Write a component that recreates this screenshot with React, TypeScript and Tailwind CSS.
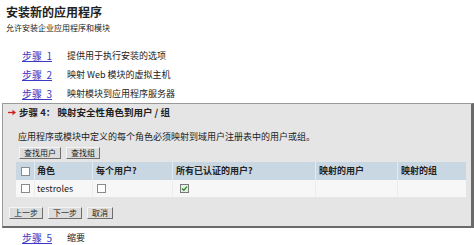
import React from 'react';

const steps = [
  { n: 1, label: '提供用于执行安装的选项' },
  { n: 2, label: '映射 Web 模块的虚拟主机' },
  { n: 3, label: '映射模块到应用程序服务器' },
];

const Box = ({ checked = false }: { checked?: boolean }) => (
  <span
    className={
      checked
        ? 'flex h-[9px] w-[9px] items-center justify-center border border-[#7a7a7a] bg-[#e4f2e4]'
        : 'block h-[9px] w-[9px] border border-[#8a8a8a] bg-white'
    }
  >
    {checked && (
      <svg width="7" height="7" viewBox="0 0 7 7">
        <path d="M1 3.5 L2.8 5.2 L6 1.6" fill="none" stroke="#2f8a2f" strokeWidth="1.4" />
      </svg>
    )}
  </span>
);

const Btn = ({ children }: { children: React.ReactNode }) => (
  <button
    type="button"
    className="flex h-[12px] items-center border border-t-[#f4f4f4] border-l-[#f4f4f4] border-r-[#6e6e6e] border-b-[#6e6e6e] bg-[#dcdcdc] px-[4px] text-[8px] leading-none text-[#222]"
  >
    {children}
  </button>
);

const StepLink = ({ n }: { n: number }) => (
  <span className="flex w-[45px] items-center">
    <span className="whitespace-pre text-[10px] leading-[12px] text-[#3a3ac4] underline underline-offset-1">
      {`步骤  ${n}`}
    </span>
  </span>
);

export default function App() {
  return (
    <div
      className="h-[245px] w-[474px] overflow-hidden bg-white text-[#222]"
      style={{ fontFamily: '"Noto Sans CJK SC", "Liberation Sans", sans-serif' }}
    >
      <div className="flex h-[19px] items-end pl-[6px] text-[12px] font-bold leading-[14px]">
        安装新的应用程序
      </div>
      <div className="mt-[4px] flex h-[10px] items-center pl-[6px] text-[8px]">允许安装企业应用程序和模块</div>

      <div className="mt-[13px] pl-[22px]">
        {steps.map((s) => (
          <div key={s.n} className="flex h-[19px] items-center">
            <StepLink n={s.n} />
            <span className="text-[9px] leading-[12px]">{s.label}</span>
          </div>
        ))}
      </div>

      <div className="ml-[2px] h-[125px] w-[472px] border-t border-l border-t-[#9a9a9a] border-l-[#9a9a9a] border-r-[3px] border-b-[2px] border-r-[#6a6a6a] border-b-[#6a6a6a] bg-[#e5e5e5]">
        <div className="flex h-[16px] items-center pl-[5px] text-[9.5px] font-bold">
          <svg width="9" height="7" viewBox="0 0 9 7" className="mr-[2px]">
            <path d="M0 3.5 H6" stroke="#d02020" strokeWidth="1.3" />
            <path d="M4.5 0.8 L8 3.5 L4.5 6.2 Z" fill="#d02020" />
          </svg>
          步骤 4： 映射安全性角色到用户 / 组
        </div>
        <div className="mt-[10px] flex h-[14px] items-center pl-[15px] text-[9px]">
          应用程序或模块中定义的每个角色必须映射到域用户注册表中的用户或组。
        </div>
        <div className="mt-[3px] flex gap-[5px] pl-[16px]">
          <Btn>查找用户</Btn>
          <Btn>查找组</Btn>
        </div>

        <div className="ml-[13px] mt-[3px] w-[450px] text-[9px]">
          <div className="grid h-[18px] grid-cols-[19px_58px_80px_143px_82px_1fr] bg-[#c9d7e3] font-bold">
            <div className="flex items-center justify-center border-r border-[#e3ebf2]">
              <Box />
            </div>
            <div className="flex items-center border-r border-[#e3ebf2] pl-[2px]">角色</div>
            <div className="flex items-center border-r border-[#e3ebf2] pl-[3px]">每个用户?</div>
            <div className="flex items-center border-r border-[#e3ebf2] pl-[3px]">所有已认证的用户?</div>
            <div className="flex items-center border-r border-[#e3ebf2] pl-[3px]">映射的用户</div>
            <div className="flex items-center pl-[3px]">映射的组</div>
          </div>
          <div className="grid h-[17px] grid-cols-[19px_58px_80px_143px_82px_1fr] bg-[#f7f7f7]">
            <div className="flex items-center justify-center border-r border-[#ececec]">
              <Box />
            </div>
            <div className="flex items-center border-r border-[#ececec] pl-[2px]">testroles</div>
            <div className="flex items-center border-r border-[#ececec] pl-[4px]">
              <Box />
            </div>
            <div className="flex items-center border-r border-[#ececec] pl-[7px]">
              <Box checked />
            </div>
            <div className="border-r border-[#ececec]" />
            <div />
          </div>
        </div>

        <div className="mt-[10px] flex gap-[5px] pl-[6px]">
          <Btn>上一步</Btn>
          <Btn>下一步</Btn>
          <Btn>取消</Btn>
        </div>
      </div>

      <div className="mt-[3px] flex h-[14px] items-center pl-[22px]">
        <StepLink n={5} />
        <span className="text-[9px] leading-[12px]">缩要</span>
      </div>
    </div>
  );
}
